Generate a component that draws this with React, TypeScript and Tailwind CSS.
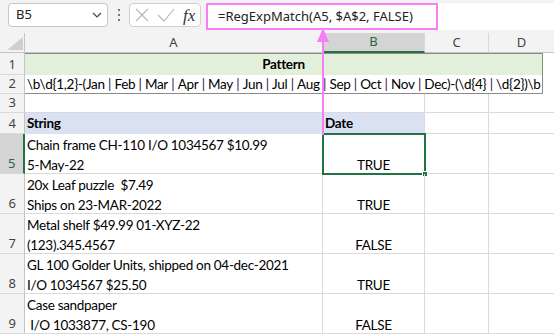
import React from "react";

const cellFont = { fontFamily: "Lato, 'Liberation Sans', sans-serif" };
const uiFont = { fontFamily: "'Noto Sans', 'Open Sans', sans-serif" };

type Row = { n: number; a: string[]; b: string };

const rows: Row[] = [
  { n: 5, a: ["Chain frame CH-110 I/O 1034567 $10.99", "5-May-22"], b: "TRUE" },
  { n: 6, a: ["20x Leaf puzzle  $7.49", "Ships on 23-MAR-2022"], b: "TRUE" },
  { n: 7, a: ["Metal shelf $49.99 01-XYZ-22", "(123).345.4567"], b: "FALSE" },
  { n: 8, a: ["GL 100 Golder Units, shipped on 04-dec-2021", "I/O 1034567 $25.50"], b: "TRUE" },
  { n: 9, a: ["Case sandpaper", "\u00a0I/O 1033877, CS-190"], b: "FALSE" },
];

const pattern = "\\b\\d{1,2}-(Jan|Feb|Mar|Apr|May|Jun|Jul|Aug|Sep|Oct|Nov|Dec)-(\\d{4}|\\d{2})\\b";

function RowHead({ n, h, active }: { n: number | string; h: string; active?: boolean }) {
  return (
    <div
      className={`${h} flex items-end justify-center pb-[1px] border-b border-b-[#d9d9d9] text-[13px] leading-[18px] ${
        active ? "bg-[#d4d4d4] text-[#1e6b41] border-r-2 border-r-[#217346]" : "bg-[#f3f3f3] text-[#444] border-r border-r-[#c4c4c4]"
      }`}
      style={uiFont}
    >
      {n}
    </div>
  );
}

export default function App() {
  const parts = pattern.split("|");
  return (
    <div className="relative w-[554px] h-[335px] overflow-hidden bg-white">
      {/* Toolbar */}
      <div className="h-[33px] bg-[#f3f3f3] flex items-start pt-[3px] pl-[8px]" style={uiFont}>
        <div className="w-[100px] h-[24px] rounded-[4px] border border-[#c6c6c6] bg-white flex items-center justify-between pl-[7px] pr-[5px] text-[13px] text-[#222]">
          <span>B5</span>
          <svg width="10" height="6" viewBox="0 0 10 6">
            <path d="M1 1 L5 5 L9 1" fill="none" stroke="#444" strokeWidth="1.2" />
          </svg>
        </div>
        <div className="ml-[10px] mr-[9px] h-[24px] flex flex-col items-center justify-center gap-[3px]">
          <span className="w-[2px] h-[2px] bg-[#777] block" />
          <span className="w-[2px] h-[2px] bg-[#777] block" />
          <span className="w-[2px] h-[2px] bg-[#777] block" />
        </div>
        <div className="w-[72px] h-[24px] rounded-[4px] border border-[#d0d0d0] bg-white flex items-center pl-[5px]">
          <svg width="14" height="14" viewBox="0 0 14 14">
            <path d="M1 1 L13 13 M13 1 L1 13" stroke="#b5b5b5" strokeWidth="1.1" />
          </svg>
          <svg width="18" height="14" viewBox="0 0 18 14" className="ml-[8px]">
            <path d="M1 7 L7 13 L17 1" fill="none" stroke="#b5b5b5" strokeWidth="1.1" />
          </svg>
          <span
            className="ml-[8px] text-[17px] italic text-[#333] leading-none"
            style={{ fontFamily: "'Liberation Serif', serif" }}
          >
            fx
          </span>
        </div>
        <div className="ml-[5px] flex-1 h-[27px] bg-white flex items-stretch">
          <div className="w-[232px] border-2 border-[#f77ef5] flex items-center pl-[10px] text-[13px] text-[#222] whitespace-nowrap">
            =RegExpMatch(A5, $A$2, FALSE)
          </div>
        </div>
      </div>

      {/* Grid */}
      <div className="grid grid-cols-[25px_298px_102px_64px_65px] tracking-[-0.3px]" style={cellFont}>
        {/* Column header */}
        <div className="h-[20px] bg-[#f3f3f3] border-r border-r-[#c4c4c4] border-b border-b-[#c4c4c4] relative">
          <svg width="16" height="13" viewBox="0 0 16 13" className="absolute left-[7px] top-[4px]">
            <path d="M16 0 L16 13 L0 13 Z" fill="#d0d0d0" />
          </svg>
        </div>
        <div className="h-[20px] bg-[#f3f3f3] border-r border-r-[#d9d9d9] border-b border-b-[#c4c4c4] flex items-center justify-center text-[13px] tracking-normal text-[#444]" style={uiFont}>A</div>
        <div className="h-[20px] bg-[#d4d4d4] border-r border-r-[#d9d9d9] border-b-2 border-b-[#217346] flex items-center justify-center text-[13px] tracking-normal text-[#1e6b41]" style={uiFont}>B</div>
        <div className="h-[20px] bg-[#f3f3f3] border-r border-r-[#d9d9d9] border-b border-b-[#c4c4c4] flex items-center justify-center text-[13px] tracking-normal text-[#444]" style={uiFont}>C</div>
        <div className="h-[20px] bg-[#f3f3f3] border-b border-b-[#c4c4c4] flex items-center justify-center text-[13px] tracking-normal text-[#444]" style={uiFont}>D</div>

        {/* Rows 1-2 */}
        <RowHead n={1} h="h-[22px]" />
        <div className="col-span-4 row-span-2 bg-white">
          <div className="w-[518px] border border-[#8a8a8a] border-l-0">
            <div className="h-[21px] bg-[#e2efda] flex items-center justify-center text-[13.5px] font-bold text-black">
              Pattern
            </div>
            <div className="h-[18px] flex items-center pl-[2px] text-[13.5px] text-black whitespace-nowrap">
              {parts.map((p, i) => (
                <React.Fragment key={i}>
                  {i > 0 && <span className="px-[3.3px] text-[#2e1452]">|</span>}
                  <span>{p}</span>
                </React.Fragment>
              ))}
            </div>
          </div>
        </div>
        <RowHead n={2} h="h-[19px]" />

        {/* Row 3 */}
        <RowHead n={3} h="h-[19px]" />
        <div className="h-[19px] border-r border-b border-[#dadada]" />
        <div className="h-[19px] border-r border-b border-[#dadada]" />
        <div className="h-[19px] border-r border-b border-[#dadada]" />
        <div className="h-[19px] border-b border-[#dadada]" />

        {/* Row 4 */}
        <RowHead n={4} h="h-[21px]" />
        <div className="h-[21px] bg-[#d9e1f2] flex items-center pl-[2px] text-[13.5px] font-bold text-black">String</div>
        <div className="h-[21px] bg-[#d9e1f2] border-r border-r-[#dadada] flex items-center pl-[2px] text-[13.5px] font-bold text-black">Date</div>
        <div className="h-[21px] border-r border-b border-[#dadada]" />
        <div className="h-[21px] border-b border-[#dadada]" />

        {rows.map((r) => (
          <React.Fragment key={r.n}>
            <RowHead n={r.n} h="h-[40px]" active={r.n === 5} />
            <div className="h-[40px] border-r border-b border-[#dadada] pl-[2px] flex flex-col justify-end text-[13.5px] leading-[20px] text-black whitespace-pre">
              <div className="relative top-[2px] flex flex-col">
                <span>{r.a[0]}</span>
                <span>{r.a[1]}</span>
              </div>
            </div>
            <div className="relative h-[40px] border-r border-b border-[#dadada] flex items-end justify-center text-[13.5px] leading-[20px] text-black">
              <span className="relative top-[2px]">{r.b}</span>
              {r.n === 5 && (
                <div className="absolute left-[-1px] top-[-1px] w-[104px] h-[42px] border-2 border-[#217346]">
                  <div className="absolute right-[-4px] bottom-[-4px] w-[6px] h-[6px] bg-[#217346] border border-white" />
                </div>
              )}
            </div>
            <div className="h-[40px] border-r border-b border-[#dadada]" />
            <div className="h-[40px] border-b border-[#dadada]" />
          </React.Fragment>
        ))}
      </div>

      {/* Pink annotation arrow */}
      <svg width="14" height="110" viewBox="0 0 14 110" className="absolute left-[316px] top-[28px]">
        <path d="M7 0 L1 14 L13 14 Z" fill="#f77ef5" />
        <path d="M7 10 L7 107" stroke="#f77ef5" strokeWidth="2" />
      </svg>
    </div>
  );
}
